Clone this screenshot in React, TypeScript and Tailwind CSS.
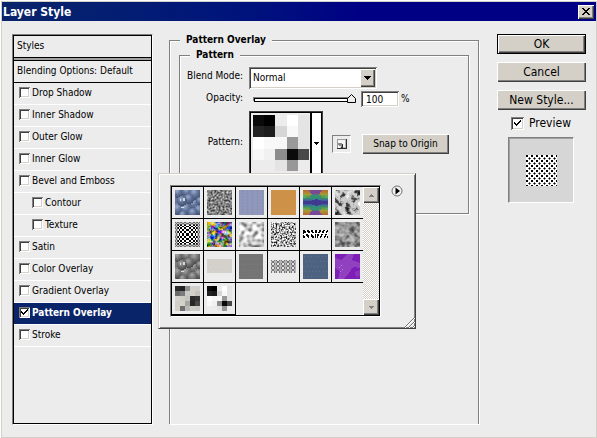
import { useState } from "react";
import type { ReactNode } from "react";
import { clsx } from "clsx";

const RAISED =
  "bg-[#d4d0c8] shadow-[inset_1px_1px_0_#fff,inset_-1px_-1px_0_#404040,inset_-2px_-2px_0_#808080]";
const SUNKEN =
  "bg-white shadow-[inset_1px_1px_0_#808080,inset_-1px_-1px_0_#fff,inset_2px_2px_0_#404040,inset_-2px_-2px_0_#d4d0c8]";
const ETCHED = "border border-[#808080] p-px shadow-[1px_1px_0_#fff,inset_1px_1px_0_#fff]";
const LEGEND = "ml-[9px] bg-[#ececec] px-[6px] leading-3 font-bold";

type Effect = { name: string; nested?: boolean };

const EFFECTS: Effect[] = [
  { name: "Drop Shadow" },
  { name: "Inner Shadow" },
  { name: "Outer Glow" },
  { name: "Inner Glow" },
  { name: "Bevel and Emboss" },
  { name: "Contour", nested: true },
  { name: "Texture", nested: true },
  { name: "Satin" },
  { name: "Color Overlay" },
  { name: "Gradient Overlay" },
  { name: "Pattern Overlay" },
  { name: "Stroke" },
];

function CheckBox({
  id,
  large = false,
  defaultChecked = false,
}: {
  id: string;
  large?: boolean;
  defaultChecked?: boolean;
}) {
  return (
    <span className="relative flex shrink-0">
      <input
        id={id}
        type="checkbox"
        defaultChecked={defaultChecked}
        className={clsx("peer appearance-none", SUNKEN, large ? "size-[13px]" : "size-[11px]")}
      />
      <svg
        width="7"
        height="7"
        viewBox="0 0 7 7"
        shapeRendering="crispEdges"
        className={clsx(
          "pointer-events-none absolute hidden peer-checked:block",
          large ? "top-[3px] left-[3px]" : "top-[2px] left-[2px]",
        )}
      >
        <path d="M0 2h1v1h1v1h1V3h1V2h1V1h1V0h1v2H6v1H5v1H4v1H3v1H2V5H1V4H0z" fill="#000" />
      </svg>
    </span>
  );
}

/* ---------- pattern swatches ---------- */

function Mosaic({ rows, cell }: { rows: string[][]; cell: number }) {
  return (
    <>
      {rows.map((row, y) =>
        row.map((fill, x) => (
          <rect key={`${x}-${y}`} x={x * cell} y={y * cell} width={cell} height={cell} fill={fill} />
        )),
      )}
    </>
  );
}

type NoiseProps = {
  id: string;
  freq: number;
  seed?: number;
  table: string;
  colored?: boolean;
  octaves?: number;
};

function Noise({ id, freq, seed = 1, table, colored = false, octaves = 1 }: NoiseProps) {
  return (
    <>
      <filter id={id} x="0" y="0" width="100%" height="100%" colorInterpolationFilters="sRGB">
        <feTurbulence type="fractalNoise" baseFrequency={freq} numOctaves={octaves} seed={seed} />
        <feColorMatrix
          values={
            colored
              ? "1 0 0 0 0 .4 .6 0 0 0 0 0 1 0 0 0 0 0 0 1"
              : "1 0 0 0 0 1 0 0 0 0 1 0 0 0 0 0 0 0 0 1"
          }
        />
        <feComponentTransfer>
          <feFuncR type="table" tableValues={table} />
          <feFuncG type="table" tableValues={table} />
          <feFuncB type="table" tableValues={table} />
        </feComponentTransfer>
      </filter>
      <rect width="25" height="25" filter={`url(#${id})`} />
    </>
  );
}

const BUBBLES = [
  [19, 14, 6],
  [24, 20, 5],
  [3, 3, 5],
  [12, 2, 5],
  [20, 4, 6],
  [25, 11, 4],
  [3, 19, 6],
  [11, 19, 6],
  [18, 23, 5],
  [14, 9, 5],
  [7, 11, 5],
  [8, 25, 4],
];

function Bubbles({ id, light, mid, dark }: { id: string; light: string; mid: string; dark: string }) {
  return (
    <>
      <radialGradient id={id} cx="0.4" cy="0.3" r="0.7">
        <stop offset="0" stopColor={light} />
        <stop offset="0.45" stopColor={mid} />
        <stop offset="1" stopColor={dark} />
      </radialGradient>
      <filter id={`${id}-soft`} x="0" y="0" width="100%" height="100%">
        <feGaussianBlur stdDeviation="0.5" />
      </filter>
      <rect width="25" height="25" fill={mid} />
      <g filter={`url(#${id}-soft)`}>
        {BUBBLES.map(([cx, cy, r]) => (
          <circle key={`${cx}-${cy}`} cx={cx} cy={cy} r={r} fill={`url(#${id})`} />
        ))}
      </g>
      <path d="M5 9h1v2H5zM8 8h2v3H8zM6 17h3v1H6z" fill="#fff" fillOpacity="0.7" />
    </>
  );
}

const WARP = [0, 1, 2, 4, 5, 7, 9, 11, 14, 16, 18, 20, 21, 23, 24, 25];

function WarpedCheck() {
  return (
    <>
      <rect width="25" height="25" fill="#fff" />
      {WARP.slice(0, -1).map((y, j) =>
        WARP.slice(0, -1).map((x, i) => {
          if ((i + j) % 2) return null;
          const far = Math.max(Math.abs(i - 7), Math.abs(j - 7));
          return (
            <rect
              key={`${x}-${y}`}
              x={x}
              y={y}
              width={WARP[i + 1] - x}
              height={WARP[j + 1] - y}
              fill={far > 5 ? "#555" : "#000"}
            />
          );
        }),
      )}
      <path d="M0 0h25v25H0zM3 3v19h19V3z" fill="#888" fillOpacity="0.5" fillRule="evenodd" />
    </>
  );
}

function TieDye() {
  return (
    <>
      <linearGradient id="dye" x1="0" y1="0" x2="0" y2="1">
        <stop offset="0" stopColor="#b8662e" />
        <stop offset="0.18" stopColor="#a89a38" />
        <stop offset="0.3" stopColor="#4a9a50" />
        <stop offset="0.4" stopColor="#3a6aa0" />
        <stop offset="0.5" stopColor="#4a2f8c" />
        <stop offset="0.6" stopColor="#3a6aa0" />
        <stop offset="0.7" stopColor="#4a9a50" />
        <stop offset="0.82" stopColor="#a89a38" />
        <stop offset="1" stopColor="#b8662e" />
      </linearGradient>
      <rect width="25" height="25" fill="url(#dye)" />
      <path d="M6 0h13l-3 5h-7zM6 25h13l-3-5h-7z" fill="#7a4a94" />
      <ellipse cx="12.5" cy="7" rx="6" ry="3" fill="#2f8a80" fillOpacity="0.8" />
      <ellipse cx="12.5" cy="18" rx="6" ry="3" fill="#2f8a80" fillOpacity="0.8" />
      <path d="M0 11h7l6-2 6 2h6v3h-6l-6 2-6-2H0z" fill="#403a90" />
      <path d="M0 5h3v3H0zM22 5h3v3h-3zM0 18h3v2H0zM22 18h3v2h-3z" fill="#5ab05a" />
    </>
  );
}

const GREY_MOSAIC = [
  ["#2b2b2b", "#222222", "#8e8e8e", "#d2d0cb", "#cfcfcb"],
  ["#6a6a6a", "#7b7b7b", "#c9c9c5", "#d4d0c8", "#c2c2be"],
  ["#d4d2ca", "#cfccc4", "#c4c4c0", "#2b2b2b", "#333333"],
  ["#cdcdc9", "#d6d2c6", "#a5a5a3", "#262626", "#474747"],
  ["#d4d0c8", "#6f6f6f", "#b9b9b5", "#d0cdc6", "#c9c9c5"],
];

const BW_MOSAIC = [
  ["#0a0a0a", "#000000", "#ececec", "#ffffff", "#e4e4e4"],
  ["#232323", "#1c1c1c", "#d6d6d6", "#f8f8f8", "#e4e4e4"],
  ["#ffffff", "#f8f8f8", "#f8f8f8", "#999999", "#e4e4e4"],
  ["#f8f8f8", "#f1f1f1", "#8c8c8c", "#0a0a0a", "#484848"],
  ["#ececec", "#ececec", "#e4e4e4", "#989898", "#ececec"],
];

const SWATCHES: { name: string; art: ReactNode }[] = [
  { name: "Bubbles", art: <Bubbles id="blue" light="#98add0" mid="#64769c" dark="#42506c" /> },
  { name: "Granite", art: <Noise id="n1" freq={0.5} octaves={2} table=".1 .1 .3 .5 .7 .9 1" /> },
  {
    name: "Woven",
    art: (
      <>
        <rect width="25" height="25" fill="#8f98ba" />
        <path d="M3 0v25M8 0v25M13 0v25M18 0v25M23 0v25" stroke="#8790b4" strokeDasharray="2 1" />
      </>
    ),
  },
  { name: "Clay", art: <rect width="25" height="25" fill="#cd9148" /> },
  { name: "Tie Dye", art: <TieDye /> },
  { name: "Slate", art: <Noise id="n5" freq={0.18} seed={12} octaves={4} table="0 .1 .3 .8 .8 1 1" /> },
  { name: "Optical", art: <WarpedCheck /> },
  {
    name: "Confetti",
    art: <Noise id="n7" freq={0.23} seed={8} octaves={3} table="0 0 .1 .5 .9 1 1" colored />,
  },
  { name: "Clouds", art: <Noise id="n8" freq={0.22} seed={3} table=".2 .3 .5 .8 1 1 1" /> },
  { name: "Static", art: <Noise id="n9" freq={0.6} seed={6} octaves={2} table="0 0 .2 .7 1 1 1" /> },
  {
    name: "Zebra",
    art: (
      <>
        <rect y="8" width="25" height="8" fill="#fff" />
        <path
          d="M0 8h2v1h1v2H1v1H0zM4 8h2v1h1v2H5V10H4zM8 8h2v2h1v1H9v-1H8zM12 8h2v3h-2zM16 8h2v2h-1v1h-2v-1h1zM20 8h2v1h-1v2h-2v-2h1zM24 8h1v2h-1v1h-1V9h1zM0 13h1v1h1v2H0zM3 12h2v1h1v3H5v-1H4v-1H3zM8 12h1v1h1v1h1v2H9v-1H8zM12 12h1v4h-1zM14 12h2v2h-1v2h-1zM18 12h2v1h-1v2h-1v1h-1v-2h1zM22 12h2v1h-1v2h-1v1h-1v-2h1zM24 14h1v2h-1z"
          fill="#000"
        />
      </>
    ),
  },
  { name: "Stone", art: <Noise id="n11" freq={0.2} seed={9} octaves={2} table=".2 .3 .4 .6 .7 .8 1" /> },
  { name: "Grey Bubbles", art: <Bubbles id="grey" light="#a8a8a8" mid="#787878" dark="#4a4a4a" /> },
  {
    name: "Parchment",
    art: (
      <>
        <rect y="5" width="25" height="14" fill="#d4d0cc" />
        <path d="M2 8.5h20M1 13.5h22M4 16.5h18" stroke="#d8ccba" strokeDasharray="1 3" />
        <path d="M3 10.5h20M5 15.5h17" stroke="#c4ccd2" strokeDasharray="1 4" />
      </>
    ),
  },
  {
    name: "Carbon",
    art: (
      <>
        <rect width="24" height="25" fill="#747474" />
        <path d="M0 4.5h24M0 10.5h24M0 16.5h24M0 22.5h24" stroke="#7c7c7c" strokeDasharray="1 2" />
      </>
    ),
  },
  {
    name: "Rings",
    art: (
      <>
        <pattern id="rings" width="5" height="4" patternUnits="userSpaceOnUse">
          <rect width="5" height="4" fill="#b4b4b4" />
          <path d="M1 0h2v1H1zM0 1h1v2H0zM3 1h1v2H3zM1 3h2v1H1z" fill="#777" />
          <path d="M1 1h2v2H1z" fill="#e4e4e4" />
        </pattern>
        <rect y="6" width="25" height="13" fill="url(#rings)" />
      </>
    ),
  },
  {
    name: "Denim",
    art: (
      <>
        <rect width="25" height="25" fill="#4d6280" />
        <path
          d="M1 2.5h24M3 7.5h22M0 12.5h25M2 17.5h23M1 22.5h24"
          stroke="#5d7290"
          strokeDasharray="1 3 1 2"
        />
      </>
    ),
  },
  {
    name: "Amethyst",
    art: (
      <>
        <rect width="25" height="25" fill="#7d1fb6" />
        <path d="M0 4l7 2 5-6h7l-2 6 8 3v5l-7-1-4 6-5 6H3l2-8-5-3z" fill="#9140c0" />
        <path d="M20 18l5-2v6l-4 1z" fill="#8b35bd" />
        <path d="M6 11h1v1H6zM4 13h1v1H4zM7 15h1v1H7zM5 17h1v1H5z" fill="#b98ad6" />
      </>
    ),
  },
  { name: "Grey Mosaic", art: <Mosaic rows={GREY_MOSAIC} cell={5} /> },
  { name: "Mosaic", art: <Mosaic rows={BW_MOSAIC} cell={5} /> },
];

/* ---------- dialog parts ---------- */

function TitleBar() {
  return (
    <header className="flex h-[19px] items-center justify-between bg-linear-to-r from-[#0a246a] to-[#000084] to-60% pr-[2px] pl-px">
      <h1 className="text-[12px] leading-4 font-bold text-white">Layer Style</h1>
      <button
        type="button"
        aria-label="Close"
        className={clsx("flex h-[14px] w-4 items-center justify-center", RAISED)}
      >
        <svg width="8" height="7" viewBox="0 0 8 7" shapeRendering="crispEdges">
          <path
            d="M0 0h2v1h1v1h2V1h1V0h2v1H7v1H6v1H5v1h1v1h1v1h1v1H6V6H5V5H3v1H2v1H0V6h1V5h1V4h1V3H2V2H1V1H0z"
            fill="#000"
          />
        </svg>
      </button>
    </header>
  );
}

function EffectList() {
  const [selected, setSelected] = useState("Pattern Overlay");

  return (
    <nav className="w-[141px] shrink-0 border border-t-[#808080] border-r-white border-b-white border-l-[#808080]">
      <div className="h-full border border-black">
        <h2 className="h-[21px] pl-[3px] leading-5">Styles</h2>
        <div className="h-1 border-y border-black bg-[#a0a0a0]" />
        <div className="h-[22px] border-b border-black pl-[3px] leading-5">
          Blending Options: Default
        </div>
        <ul>
          {EFFECTS.map(({ name, nested }) => (
            <li
              key={name}
              onClick={() => setSelected(name)}
              className={clsx(
                "flex h-[22px] items-center gap-[2px] border-b border-white pb-[2px]",
                nested ? "pl-[18px]" : "pl-[5px]",
                selected === name && "bg-[#0a246a] font-bold text-white",
              )}
            >
              <CheckBox id={name} defaultChecked={name === "Pattern Overlay"} />
              <label htmlFor={name}>{name}</label>
            </li>
          ))}
        </ul>
      </div>
    </nav>
  );
}

function OpacityRow() {
  const [opacity, setOpacity] = useState(100);

  return (
    <div className="flex items-center">
      <div className="relative mr-[5px] ml-[5px] h-4 w-[102px]">
        <div className="mt-[7px] h-1 w-[97px] border border-black bg-white shadow-[-1px_-1px_0_#808080]" />
        <svg
          width="9"
          height="9"
          viewBox="0 0 9 9"
          className="absolute top-[3px]"
          style={{ left: `${(opacity / 100) * 93}px` }}
        >
          <path d="M.5 8.5V4.5L4.5.5l4 4v4z" fill="#ececec" stroke="#000" />
        </svg>
        <input
          id="opacity"
          type="range"
          min={0}
          max={100}
          value={opacity}
          onChange={(e) => setOpacity(Number(e.target.value))}
          className="absolute inset-0 w-full opacity-0"
        />
      </div>
      <input
        type="text"
        aria-label="Opacity value"
        value={opacity}
        onChange={(e) => setOpacity(Number(e.target.value) || 0)}
        className={clsx("h-4 w-[38px] pl-[5px]", SUNKEN)}
      />
      <span className="pl-[2px]">%</span>
    </div>
  );
}

function PatternPicker() {
  return (
    <div className="flex items-center">
      <button
        type="button"
        aria-label="Choose pattern"
        className="flex h-[65px] w-[74px] border-2 border-black outline-1 -outline-offset-1 outline-[#404040]"
      >
        <span className="flex h-full flex-1 items-start pt-[2px] pl-[2px]">
          <svg viewBox="0 0 25 25" className="size-14" shapeRendering="crispEdges">
            <Mosaic rows={BW_MOSAIC} cell={5} />
          </svg>
        </span>
        <span className="flex h-full w-[11px] items-center justify-center border-l-2 border-black bg-white">
          <svg width="5" height="3" viewBox="0 0 5 3" shapeRendering="crispEdges">
            <path d="M0 0h5v1H4v1H3v1H2V2H1V1H0z" fill="#000" />
          </svg>
        </span>
      </button>
      <button
        type="button"
        aria-label="New preset from this pattern"
        className="ml-[9px] flex h-[18px] w-[19px] items-center justify-center border border-t-[#808080] border-r-white border-b-white border-l-[#808080]"
      >
        <svg width="10" height="10" viewBox="0 0 10 10" shapeRendering="crispEdges">
          <path d="M0 0h10v10H0z" fill="#f6f6f6" />
          <path d="M0 0h9v1H1v9H0z" fill="#9a9a9a" />
          <path d="M9 0h1v10H9zM0 9h10v1H0z" fill="#303030" />
          <path d="M8 1h1v8H8zM3 8h6v1H3z" fill="#b8b8b8" />
          <path d="M1 4h4v1h1v4H4V7H2V6H1z" fill="#8a8a8a" />
          <path d="M5 5h1v4H4V8h1z" fill="#303030" />
        </svg>
      </button>
      <button type="button" className={clsx("ml-[11px] h-5 w-[87px] text-center", RAISED)}>
        Snap to Origin
      </button>
    </div>
  );
}

function ScrollButton({ up = false, label }: { up?: boolean; label: string }) {
  return (
    <button
      type="button"
      aria-label={label}
      className={clsx("flex size-4 items-center justify-center", RAISED)}
    >
      <svg width="5" height="3" viewBox="0 0 5 3" shapeRendering="crispEdges">
        <path
          d={up ? "M2 0h1v1h1v1h1v1H0V2h1V1h1z" : "M0 0h5v1H4v1H3v1H2V2H1V1H0z"}
          fill="#808080"
        />
      </svg>
    </button>
  );
}

function PatternMenu() {
  return (
    <div className="absolute top-[127px] left-[-12px] z-10 flex h-[156px] w-[258px] items-start border border-t-[#d4d0c8] border-r-[#404040] border-b-[#404040] border-l-[#d4d0c8] bg-[#ececec] pt-[11px] pl-[11px] shadow-[inset_1px_1px_0_#fff,inset_-1px_-1px_0_#808080]">
      <div className="flex h-[132px] w-[211px] border border-t-[#808080] border-r-white border-b-white border-l-[#808080]">
        <div className="flex flex-1 border border-black">
          <ul className="-mt-px -ml-px grid grow grid-cols-[repeat(6,32px)] grid-rows-[repeat(4,32px)]">
            {SWATCHES.map(({ name, art }) => (
              <li key={name} className="-mr-px -mb-px border border-black">
                <button type="button" aria-label={name} className="block pt-[3px] pl-[3px]">
                  <svg width="25" height="25" viewBox="0 0 25 25" shapeRendering="crispEdges">
                    {art}
                  </svg>
                </button>
              </li>
            ))}
          </ul>
          <div className="flex w-4 flex-col justify-between bg-[#ececec] bg-[repeating-conic-gradient(#d4d0c8_0_25%,#fff_0_50%)] bg-size-[2px_2px]">
            <ScrollButton up label="Scroll up" />
            <ScrollButton label="Scroll down" />
          </div>
        </div>
      </div>
      <button type="button" aria-label="Pattern options" className="ml-[10px]">
        <svg width="12" height="12" viewBox="0 0 12 12">
          <circle cx="6" cy="6" r="5" fill="#f4f4f4" stroke="#707070" />
          <path d="M4.5 2.5L9 6 4.5 9.5z" fill="#000" />
        </svg>
      </button>
      <svg width="12" height="12" viewBox="0 0 12 12" className="absolute right-0 bottom-0">
        <path d="M1 12L12 1M5 12l7-7M9 12l3-3" stroke="#707070" />
        <path d="M2 12L12 2M6 12l6-6M10 12l2-2" stroke="#fff" />
      </svg>
    </div>
  );
}

function PatternPanel() {
  return (
    <fieldset
      className={clsx("relative mr-px mb-px ml-4 min-w-0 flex-1 self-stretch border-b-0", ETCHED)}
    >
      <legend className={LEGEND}>Pattern Overlay</legend>
      <fieldset className={clsx("mx-2 mt-[2px] h-[165px]", ETCHED)}>
        <legend className={LEGEND}>Pattern</legend>
        <div className="grid grid-cols-[62px_1fr] gap-x-[6px]">
          <label htmlFor="blend" className="pt-[7px] text-right">
            Blend Mode:
          </label>
          <div className="relative mt-[5px] h-[22px] w-[128px]">
            <select id="blend" className={clsx("size-full appearance-none pl-1", SUNKEN)}>
              <option>Normal</option>
              <option>Multiply</option>
              <option>Screen</option>
            </select>
            <span
              className={clsx(
                "pointer-events-none absolute top-[2px] right-[2px] flex h-[18px] w-[15px] items-center justify-center",
                RAISED,
              )}
            >
              <svg width="7" height="4" viewBox="0 0 7 4" shapeRendering="crispEdges">
                <path d="M0 0h7v1H6v1H5v1H4v1H3V3H2V2H1V1H0z" fill="#000" />
              </svg>
            </span>
          </div>
          <label htmlFor="opacity" className="pt-[2px] text-right">
            Opacity:
          </label>
          <div className="mt-[2px]">
            <OpacityRow />
          </div>
          <div className="self-center text-right">Pattern:</div>
          <div className="mt-1">
            <PatternPicker />
          </div>
        </div>
      </fieldset>
      <PatternMenu />
    </fieldset>
  );
}

function Preview() {
  return (
    <div className="mt-[6px] ml-[11px] flex size-[66px] items-center justify-center border border-t-[#808080] border-r-white border-b-white border-l-[#808080] bg-[#d6d6d6] shadow-[inset_1px_1px_0_#a0a0a0]">
      <svg width="31" height="31" viewBox="0 0 31 31" shapeRendering="crispEdges">
        <pattern id="dots" width="5" height="5" patternUnits="userSpaceOnUse">
          <rect width="5" height="5" fill="#fff" />
          <path d="M0 0h2v2H0z" fill="#000" />
          <path d="M3 2h1v1h1v1H4v1H3V4H2V3h1z" fill="#666" />
          <path d="M3 3h1v1H3z" fill="#000" />
        </pattern>
        <rect width="31" height="31" fill="url(#dots)" />
      </svg>
    </div>
  );
}

function Actions() {
  const button = "block h-5 w-full text-center leading-[18px]";
  return (
    <aside className="ml-[17px] w-[89px] shrink-0 text-[12px]">
      <button type="button" className={clsx(button, "border border-black", RAISED)}>
        OK
      </button>
      <button type="button" className={clsx(button, "mt-2", RAISED)}>
        Cancel
      </button>
      <button type="button" className={clsx(button, "mt-2", RAISED)}>
        New Style...
      </button>
      <div className="mt-[5px] ml-[14px] flex items-center gap-[5px] leading-4">
        <CheckBox id="preview" large defaultChecked />
        <label htmlFor="preview">Preview</label>
      </div>
      <Preview />
    </aside>
  );
}

export default function App() {
  return (
    <div className="min-h-screen bg-white pt-px pl-px font-['DejaVu_Sans_Condensed','DejaVu_Sans',sans-serif] text-[10px] leading-[14px] text-black">
      <div className="flex min-h-[437px] flex-col border border-[#d4d0c8] bg-[#ececec]">
        <TitleBar />
        <main className="flex flex-1 items-start pt-[13px] pr-[10px] pb-3 pl-[10px]">
          <div className="flex flex-1 self-stretch">
            <EffectList />
            <PatternPanel />
          </div>
          <Actions />
        </main>
      </div>
    </div>
  );
}
